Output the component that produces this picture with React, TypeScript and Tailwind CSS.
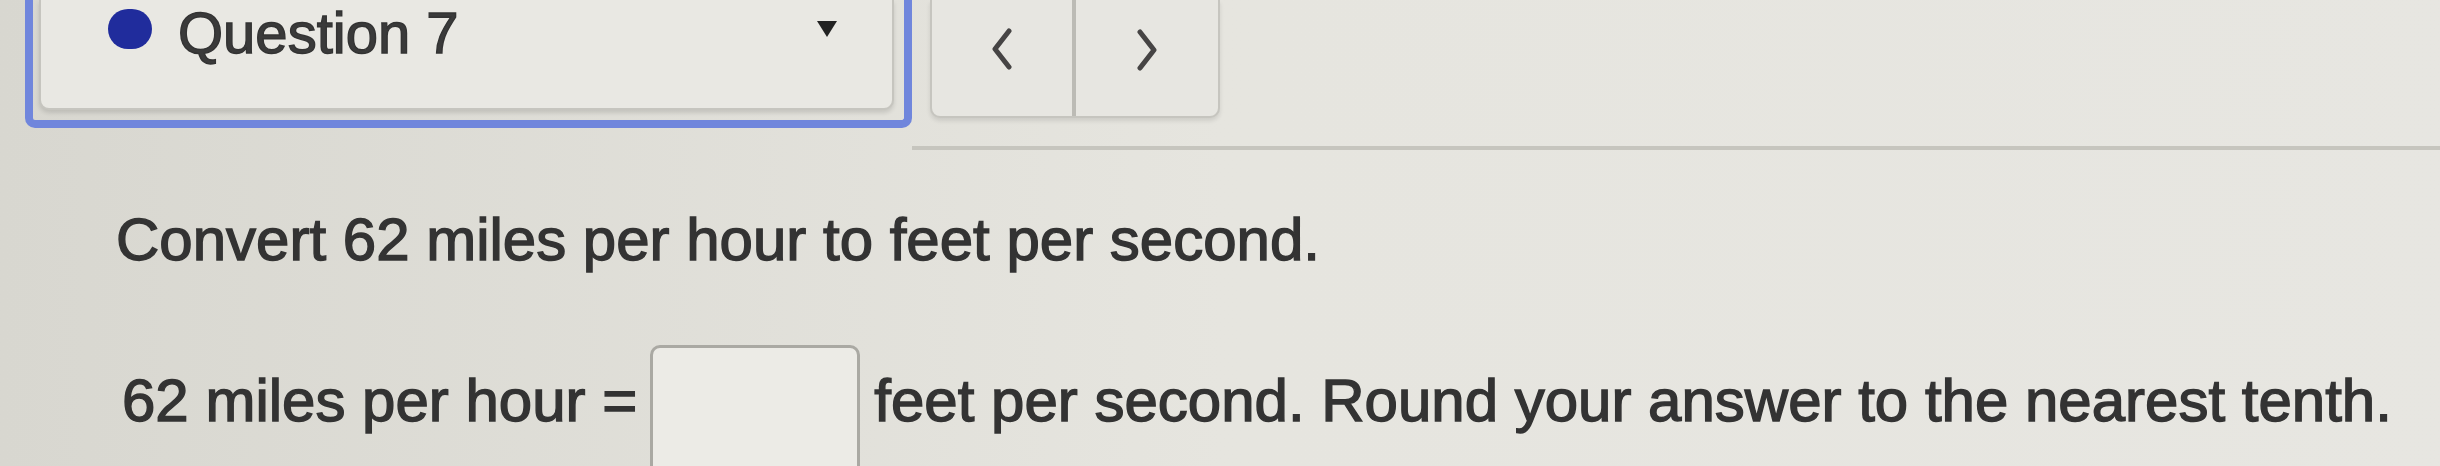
import React from 'react'

function Chevron({ dir }: { dir: 'left' | 'right' }) {
  const d = dir === 'left' ? 'M19 3 L5 21 L19 39' : 'M5 3 L19 21 L5 39'
  return (
    <svg width="24" height="42" viewBox="0 0 24 42" fill="none">
      <path d={d} stroke="#464444" strokeWidth="5" strokeLinecap="round" strokeLinejoin="round" />
    </svg>
  )
}

export default function App() {
  return (
    <div className="w-full h-[466px] overflow-hidden bg-linear-to-r from-[#d8d7d0] via-[#e6e5df] to-[#e7e6e1] font-['Liberation_Sans',Arial,sans-serif] text-[#333] [-webkit-text-stroke:1.4px_#333]">
      {/* header */}
      <div className="flex items-start h-[150px]">
        <div className="ml-[25px] w-[887px] h-[128px] border-x-[8px] border-b-[8px] border-[#7086dc] rounded-b-[10px] pl-[6px] pr-[10px] pb-[10px]">
          <div className="h-full flex items-start border-x-2 border-b-2 border-[#c6c5bf] rounded-b-[10px] bg-[#e9e8e3] shadow-[0_3px_4px_rgba(0,0,0,0.12)]">
            <div className="flex items-center h-[58px] mt-[4px] w-full">
              <span className="ml-[67px] -mt-[8px] w-[44px] h-[40px] rounded-full bg-[#202c9c] shrink-0" />
              <span className="ml-[26px] text-[58px] leading-none text-[#3a3a3a]">Question 7</span>
              <svg className="ml-auto mr-[54px] -mt-[8px]" width="22" height="18" viewBox="0 0 22 18">
                <polygon points="1,1 21,1 11,17" fill="#222" />
              </svg>
            </div>
          </div>
        </div>
        <div className="flex-1 h-[150px] border-b-4 border-[#c6c5be]">
          <div className="ml-[18px] flex h-[118px] w-[290px] border-x-2 border-b-2 border-[#c6c5bf] rounded-b-[10px] bg-[#e7e6e1] shadow-[0_3px_4px_rgba(0,0,0,0.10)]">
            <button className="w-[140px] flex justify-center pt-[28px]">
              <Chevron dir="left" />
            </button>
            <div className="w-[4px] bg-[#bcbbb5]" />
            <button className="flex-1 flex justify-center pt-[29px]">
              <Chevron dir="right" />
            </button>
          </div>
        </div>
      </div>

      {/* question */}
      <div className="pl-[116px]">
        <p className="mt-[60px] text-[60px] leading-none whitespace-nowrap">
          Convert 62 miles per hour to feet per second.
        </p>
        <div className="mt-[75px] ml-[6px] flex items-start whitespace-nowrap text-[60px] leading-none">
          <span className="mt-[26px]">62 miles per hour =</span>
          <div className="ml-[13px] w-[210px] h-[150px] shrink-0 border-[3px] border-[#aaa9a3] rounded-[10px] bg-[#ecebe6] [-webkit-text-stroke:0]" />
          <span className="ml-[14px] mt-[26px]">feet per second. Round your answer to the nearest tenth.</span>
        </div>
      </div>
    </div>
  )
}
